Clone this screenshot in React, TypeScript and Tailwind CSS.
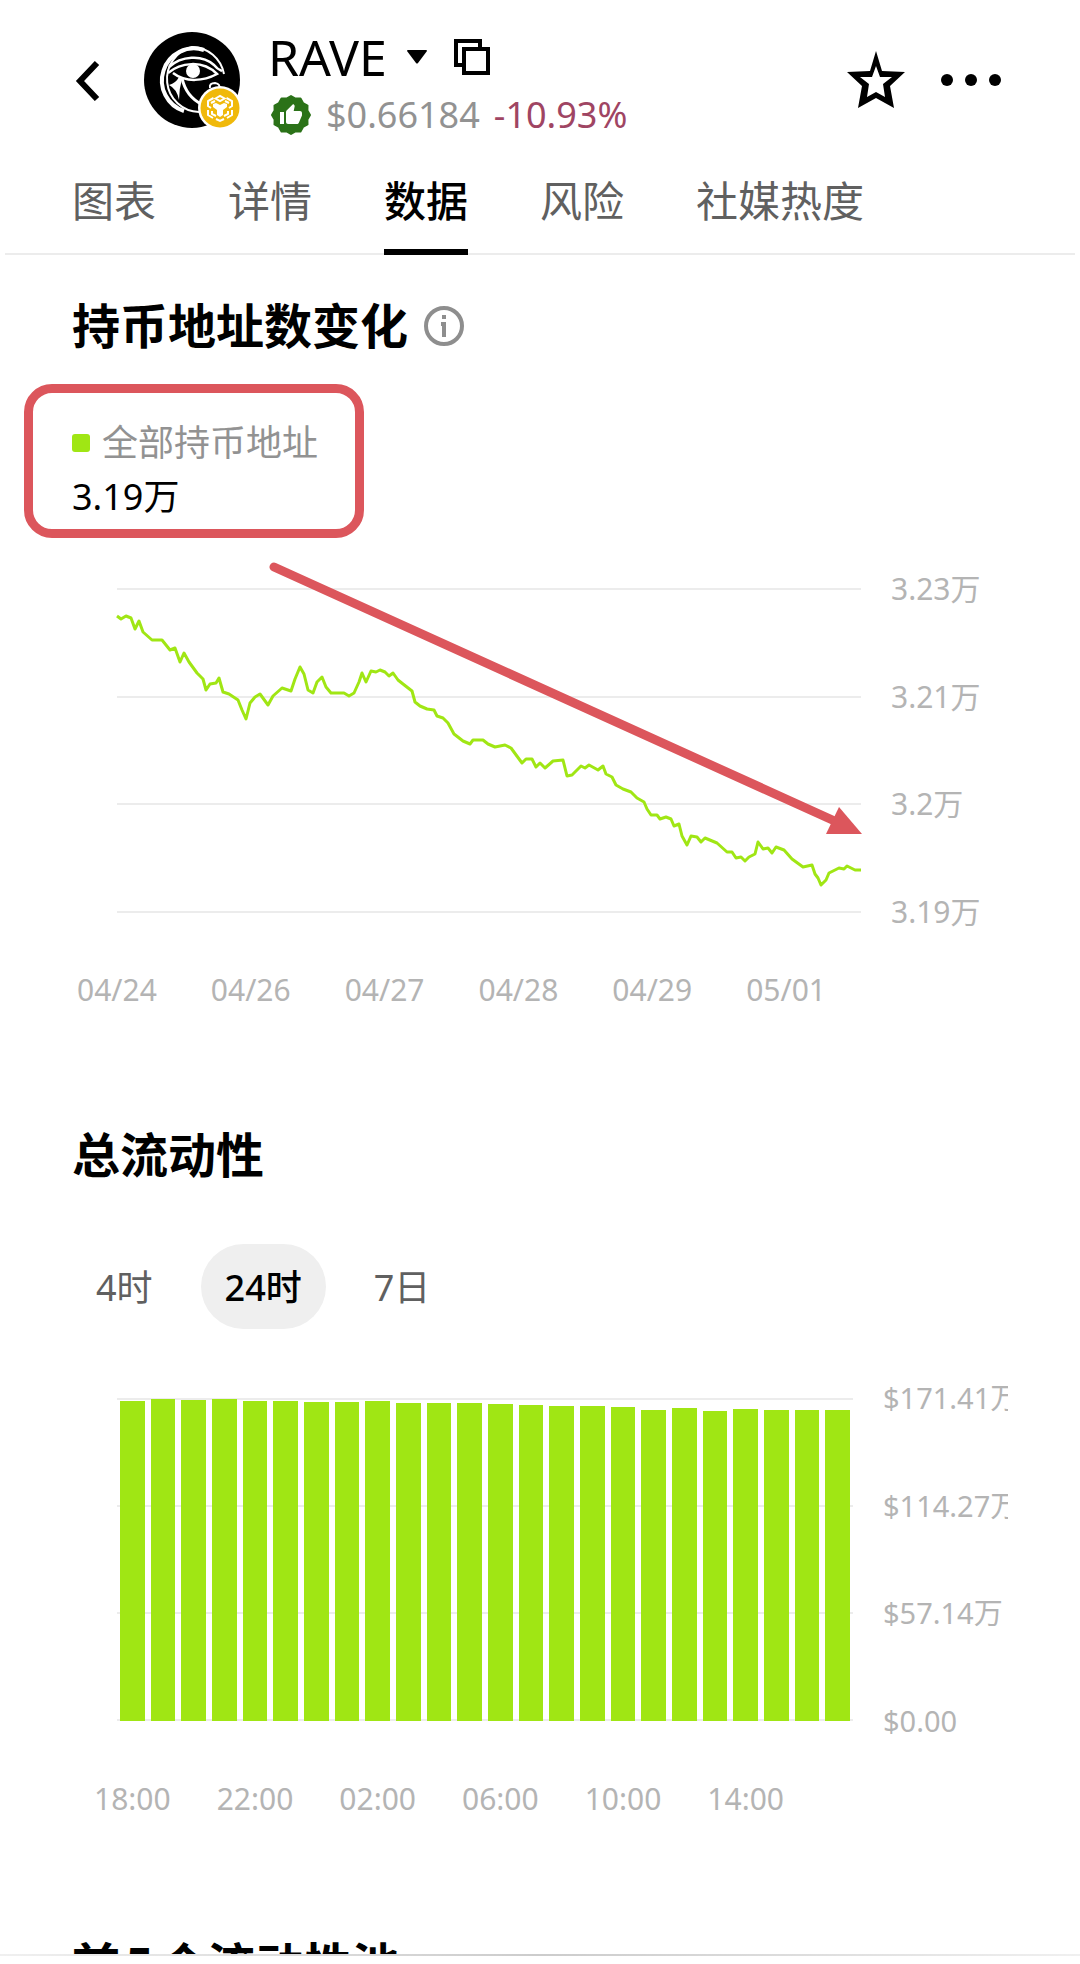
import React, { useState } from "react";
import { MdThumbUp } from "react-icons/md";

const tabs = ["图表", "详情", "数据", "风险", "社媒热度"];
const ranges = ["4时", "24时", "7日"];

const holderTicks = ["3.23万", "3.21万", "3.2万", "3.19万"];
const holderDates = ["04/24", "04/26", "04/27", "04/28", "04/29", "05/01"];

// x,y pairs on the 744 x 323 plot
const holderPoints =
  "0,27 4,30 9,27 14,29 18,40 22,32 26,43 35,51 45,51 53,61 58,59 63,73 67,64 72,73 80,84 86,90 89,101 93,95 99,94 102,89 106,103 112,105 121,111 125,121 129,130 133,114 138,108 143,105 151,116 156,107 165,99 174,102 178,90 183,78 187,85 191,101 196,104 200,93 205,88 209,98 214,104 227,104 232,107 237,104 242,93 245,84 249,93 254,82 259,83 263,81 268,83 272,87 276,84 281,91 286,95 295,102 298,113 303,117 310,120 317,121 320,127 326,129 331,134 337,145 346,152 353,155 356,151 366,151 371,155 378,158 388,156 394,159 405,174 409,170 415,170 419,178 423,174 428,179 436,172 446,171 450,187 455,186 464,177 468,179 472,176 481,181 486,177 489,185 495,188 499,196 506,200 514,203 520,209 527,213 530,220 534,226 540,226 543,230 549,228 554,230 557,237 562,235 565,247 570,256 574,247 580,248 584,253 588,249 600,254 610,263 615,263 619,269 624,268 628,272 632,268 638,265 641,253 646,260 651,259 655,264 659,258 667,261 675,270 686,278 695,276 698,285 701,289 704,296 709,291 712,284 722,279 727,280 730,277 738,281 744,281";

const liquidityTicks = ["$171.41万", "$114.27万", "$57.14万", "$0.00"];
const liquidityHours = ["18:00", "22:00", "02:00", "06:00", "10:00", "14:00"];
const liquidityMax = 171.41;
const liquidity = [
  169.8, 170.9, 170.3, 170.9, 169.8, 169.8, 169.3, 169.3, 169.8, 169.0, 169.0,
  168.8, 168.0, 167.7, 167.2, 167.2, 166.7, 165.3, 166.1, 164.6, 165.6, 165.0,
  165.0, 165.2,
];

const sealPoints = Array.from({ length: 24 }, (_, i) => {
  const r = i % 2 === 0 ? 19 : 17;
  const a = (i * Math.PI) / 12;
  return `${(21 + r * Math.sin(a)).toFixed(1)},${(21 - r * Math.cos(a)).toFixed(1)}`;
}).join(" ");

function TokenLogo() {
  return (
    <div className="relative size-24">
      <svg viewBox="0 0 96 96" className="size-24" fill="none" stroke="white">
        <circle cx="48" cy="48" r="48" fill="black" stroke="none" />
        <path d="M80 42A33 33 0 0 0 48 15A33 33 0 0 0 55 80" strokeWidth="2" />
        <path d="M60 18A32 32 0 0 0 40 79" strokeWidth="4" />
        <path d="M25 35C37 24 58 22 70 33Q73 37 78 39" strokeWidth="2.5" />
        <path d="M24 41C36 31 58 27 73 42C60 49 42 51 29 41" strokeWidth="2.5" />
        <circle cx="49" cy="39" r="7" fill="white" stroke="none" />
        <path d="M25 53Q32 51 35 45L38 47Q35 57 35 68Q33 57 25 53Z" fill="white" stroke="none" />
        <path d="M38 46Q42 65 59 73" strokeWidth="3" />
        <path d="M66 56Q65 51 71 51Q77 52 75 57" strokeWidth="2" />
      </svg>
      <svg viewBox="-22 -22 44 44" className="absolute -right-0.5 -bottom-0.5 size-11" fill="none" stroke="white">
        <circle r="22" fill="white" stroke="none" />
        <circle r="19.5" fill="#f0b90b" stroke="none" />
        <g strokeWidth="2">
          <path d="M-4.5 -9.5L0 -12L4.5 -9.5L0 -7Z" />
          <path d="M-6.5 -10L-12 -7V-2L-9 0M6.5 -10L12 -7V-2L9 0" />
          <path d="M-12 2V7L-7 10M12 2V7L7 10M-4 11L0 13L4 11" />
          <path d="M-9 -5L-5 -7M9 -5L5 -7M-8 3V6L-4 8M8 3V6L4 8" />
        </g>
        <path d="M-7 -4L-4 -5L0 -3L4 -5L7 -4V-1L3 2V7L0 9L-3 7V2L-7 -1Z" fill="white" stroke="none" />
      </svg>
    </div>
  );
}

function Header() {
  return (
    <header className="flex h-[160px] shrink-0 items-center pr-[79px] pl-[72px]">
      <button aria-label="返回" className="w-[72px]">
        <svg viewBox="0 0 30 42" className="h-[42px] w-[30px]" fill="none" stroke="black" strokeWidth="6">
          <path d="M25 4L8 22L25 40" />
        </svg>
      </button>
      <TokenLogo />
      <div className="ml-[28px] pt-[10px]">
        <div className="flex h-[60px] items-center">
          <h1 className="text-[50px] leading-[60px]">RAVE</h1>
          <button aria-label="切换代币" className="ml-[20px]">
            <svg viewBox="0 0 20 14" className="h-[14px] w-[20px]">
              <path d="M1 0H19Q20 0 20 1L11 13Q10 14 9 13L0 1Q0 0 1 0Z" />
            </svg>
          </button>
          <button aria-label="复制" className="ml-[27px]">
            <svg viewBox="0 0 36 36" className="size-9" fill="none" stroke="black" strokeWidth="4">
              <path d="M26 9V2H2V26H9" />
              <path d="M10 10H34V34H10Z" />
            </svg>
          </button>
        </div>
        <div className="flex h-[56px] items-center text-[36px] leading-[56px]">
          <span className="relative mr-[14px] ml-[2px] size-[42px]">
            <svg viewBox="0 0 42 42" className="size-[42px]" fill="#2b7218" stroke="#2b7218" strokeLinejoin="round">
              <polygon points={sealPoints} strokeWidth="2" />
            </svg>
            <MdThumbUp className="absolute top-[9px] left-[9px] size-6 text-white" />
          </span>
          <span className="text-[#929292]">$0.66184</span>
          <span className="ml-[14px] text-[#9f4563]">-10.93%</span>
        </div>
      </div>
      <button aria-label="收藏" className="ml-auto">
        <svg viewBox="0 0 58 58" className="size-[58px]" fillRule="evenodd">
          <path d="M29 0L35 20L58 21L43 35L47 57L29 47L11 57L15 35L0 21L23 20ZM29 15L25 26L13 26L22 33L20 46L29 41L38 46L36 33L45 26L33 26Z" />
        </svg>
      </button>
      <button aria-label="更多" className="ml-[36px]">
        <svg viewBox="0 0 60 12" className="h-[12px] w-[60px]">
          <circle cx="6" cy="6" r="6" />
          <circle cx="30" cy="6" r="6" />
          <circle cx="54" cy="6" r="6" />
        </svg>
      </button>
    </header>
  );
}

function AxisLabels({ items, className }: { items: string[]; className: string }) {
  return (
    <div
      className={`-my-[20px] flex shrink-0 flex-col justify-between overflow-hidden leading-[40px] whitespace-nowrap text-[#b4b4b4] ${className}`}
    >
      {items.map((item) => (
        <span key={item}>{item}</span>
      ))}
    </div>
  );
}

function TimeLabels({ items }: { items: string[] }) {
  return (
    <div className="mt-[58px] grid grid-cols-6 text-center text-[30px] leading-[40px] text-[#b4b4b4]">
      {items.map((item) => (
        <span key={item}>{item}</span>
      ))}
    </div>
  );
}

function HolderChart() {
  return (
    <div className="mt-[65px]">
      <div className="flex gap-[30px] pr-[72px] pl-[117px]">
        <svg
          viewBox="0 0 744 323"
          preserveAspectRatio="none"
          className="h-[323px] min-w-0 flex-1 overflow-visible"
          fill="none"
        >
          <path d="M0 0H744M0 108H744M0 215H744M0 323H744" stroke="#ececec" strokeWidth="2" />
          <polyline points={holderPoints} stroke="#a0e614" strokeWidth="3" strokeLinejoin="round" />
          <path d="M157 -22L722 234" stroke="#dc565c" strokeWidth="9" strokeLinecap="round" />
          <path d="M722 218L745 245H709Z" fill="#dc565c" />
        </svg>
        <AxisLabels items={holderTicks} className="w-[117px] text-[30px]" />
      </div>
      <div className="pr-[227px] pl-[50px]">
        <TimeLabels items={holderDates} />
      </div>
    </div>
  );
}

function LiquidityChart() {
  return (
    <div className="mt-[69px]">
      <div className="flex gap-[30px] pr-[72px] pl-[117px]">
        <div className="relative h-[323px] min-w-0 flex-1">
          <div className="absolute inset-0 flex flex-col justify-between">
            <div className="border-t-2 border-[#ececec]" />
            <div className="border-t-2 border-[#ececec]" />
            <div className="border-t-2 border-[#ececec]" />
            <div className="border-t-2 border-[#ececec]" />
          </div>
          <div className="relative flex h-full items-end gap-[6px] px-[3px]">
            {liquidity.map((value, index) => (
              <div
                key={index}
                className="flex-1 bg-[#a0e614]"
                style={{ height: `${(value / liquidityMax) * 100}%` }}
              />
            ))}
          </div>
        </div>
        <AxisLabels items={liquidityTicks} className="w-[125px] text-[29px]" />
      </div>
      <div className="pr-[273px] pl-[71px]">
        <TimeLabels items={liquidityHours} />
      </div>
    </div>
  );
}

function App() {
  const [tab, setTab] = useState("数据");
  const [range, setRange] = useState("24时");

  return (
    <div className="flex h-screen flex-col bg-white font-['Noto_Sans','Noto_Sans_CJK_SC',sans-serif] text-black">
      <Header />
      <nav className="mx-[5px] flex h-[95px] shrink-0 gap-[72px] border-b-2 border-[#ececec] px-[67px]">
        {tabs.map((item) => (
          <button
            key={item}
            onClick={() => setTab(item)}
            className={`-mb-[2px] h-[95px] border-b-[6px] pb-[7px] text-[42px] leading-[82px] ${
              item === tab ? "border-black font-medium" : "border-transparent text-[#606060]"
            }`}
          >
            {item}
          </button>
        ))}
      </nav>

      <main className="flex-1 overflow-y-auto pt-[39px] [scrollbar-width:none]">
        <section>
          <div className="flex items-center px-[72px]">
            <h2 className="text-[48px] leading-[64px] font-bold">持币地址数变化</h2>
            <button aria-label="说明" className="ml-[16px]">
              <svg viewBox="0 0 40 40" className="size-10" fill="none" stroke="#8e8e8e" strokeWidth="4">
                <circle cx="20" cy="20" r="18" />
                <path d="M17 18H20V31M20 9V13" />
              </svg>
            </button>
          </div>
          <div className="relative mt-[58px] ml-[72px] w-fit text-[36px] leading-[54px]">
            <div className="absolute -top-[32px] -right-[46px] -bottom-[14px] -left-[48px] rounded-[28px] border-[9px] border-[#dc565c]" />
            <div className="flex items-center gap-[12px] text-[#929292]">
              <span className="size-[18px] rounded-[3px] bg-[#a0e614]" />
              全部持币地址
            </div>
            <div>3.19万</div>
          </div>
          <HolderChart />
        </section>

        <section className="mt-[113px]">
          <h2 className="px-[72px] text-[48px] leading-[64px] font-bold">总流动性</h2>
          <div className="mt-[57px] flex gap-[24px] px-[72px]">
            {ranges.map((item) => (
              <button
                key={item}
                onClick={() => setRange(item)}
                className={`h-[85px] rounded-full px-[24px] pt-[2px] text-[36px] ${
                  item === range ? "bg-[#efefef] font-medium" : "text-[#606060]"
                }`}
              >
                {item}
              </button>
            ))}
          </div>
          <LiquidityChart />
        </section>

        <section className="mt-[114px]">
          <h2 className="px-[72px] text-[48px] leading-[64px] font-bold">
            前<span className="mx-[6px]">5</span>个流动性池
          </h2>
        </section>
      </main>
      <footer className="h-[10px] shrink-0 bg-white">
        <div className="h-[2px] bg-linear-to-r from-[#f0f0f0] via-[#cccccc] to-[#f0f0f0]" />
      </footer>
    </div>
  );
}

export default App;
